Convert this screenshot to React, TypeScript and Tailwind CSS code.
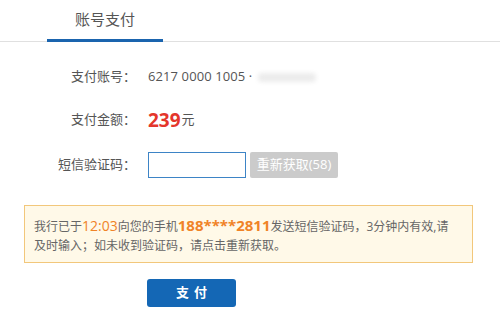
import React from 'react';

const font = { fontFamily: '"Open Sans", "Noto Sans CJK SC", sans-serif' };

function Row({ label, children, className }: { label: string; children: React.ReactNode; className?: string }) {
  return (
    <div className={`flex items-center ${className || ''}`}>
      <div className="w-[136px] text-right text-[13px] text-[#555]">{label}</div>
      <div className="ml-3 flex items-center">{children}</div>
    </div>
  );
}

export default function App() {
  return (
    <div className="w-[500px] h-[315px] bg-white overflow-hidden" style={font}>
      {/* Tab header */}
      <div className="h-[42px] border-b border-[#e0e0e0] flex items-end">
        <div className="ml-[47px] w-[116px] h-[42px] -mb-[1px] border-b-[3px] border-[#1a64ae] flex justify-center pt-[8px]">
          <span className="text-[15px] text-[#555] leading-[22px]">账号支付</span>
        </div>
      </div>

      {/* Form rows */}
      <Row label="支付账号：" className="mt-[24px] h-[22px]">
        <span className="text-[13px] text-[#555] tracking-[0.1px]">6217 0000 1005 ·</span>
        <span className="ml-[6px] w-[58px] h-[9px] bg-[#ececec] rounded-sm blur-[2px]" />
      </Row>

      <Row label="支付金额：" className="mt-[21px] h-[22px]">
        <span className="text-[19px] font-bold text-[#e4362c] leading-none">239</span>
        <span className="text-[13px] text-[#555] ml-[1px]">元</span>
      </Row>

      <Row label="短信验证码：" className="mt-[21px] h-[26px]">
        <input
          type="text"
          className="w-[98px] h-[26px] border border-[#3d84c6] bg-white outline-none"
        />
        <div className="ml-[4px] w-[88px] h-[26px] rounded-[2px] bg-[#cbcbcb] text-white text-[13px] flex items-center justify-center">
          重新获取(58)
        </div>
      </Row>

      {/* Notice */}
      <div className="mt-[27px] ml-[24px] w-[449px] h-[58px] border border-[#f2c77b] bg-[#fff9e8] px-[9px] pt-[10px] text-[12px] text-[#666] leading-[19px]">
        <div>
          我行已于<span className="text-[14px] text-[#f08327]">12:03</span>向您的手机<span className="text-[15px] font-bold text-[#f08327]">188****2811</span>发送短信验证码，3分钟内有效,请
        </div>
        <div>及时输入；如未收到验证码，请点击重新获取。</div>
      </div>

      {/* Pay button */}
      <div className="mt-[16px] ml-[147px] w-[89px] h-[28px] rounded-[3px] bg-[#1467b5] text-white text-[13px] font-bold flex items-center justify-center tracking-[5px] pl-[5px]">
        支付
      </div>
    </div>
  );
}
